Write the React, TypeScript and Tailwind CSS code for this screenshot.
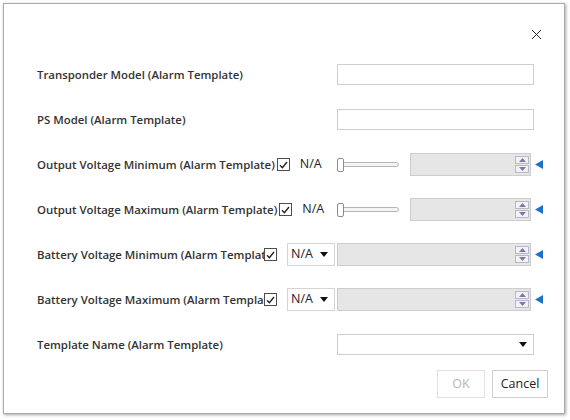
import { X } from 'lucide-react'

const font = { fontFamily: '"Open Sans", "Noto Sans", sans-serif' }

const Caret = () => (
  <svg width="8" height="5" viewBox="0 0 8 5" className="shrink-0">
    <path d="M0 0h8L4 5z" fill="#111" />
  </svg>
)

const Marker = () => (
  <svg width="8" height="9" viewBox="0 0 8 9" className="ml-[4px] shrink-0">
    <path d="M8 0v9L0 4.5z" fill="#1a73c8" />
  </svg>
)

const Check = () => (
  <div className="flex h-[13px] w-[13px] shrink-0 items-center justify-center border border-[#4d4d4d] bg-white">
    <svg width="9" height="8" viewBox="0 0 9 8">
      <path d="M1 4.2l2.4 2.5L8 1" fill="none" stroke="#222" strokeWidth="1.4" />
    </svg>
  </div>
)

const Spin = () => (
  <div className="flex h-full w-[14px] flex-col justify-center gap-[1px] py-[2px]">
    <div className="flex flex-1 items-center justify-center border border-[#b8b8c8] bg-[#f2f2f6]">
      <svg width="7" height="4" viewBox="0 0 7 4">
        <path d="M0 4h7L3.5 0z" fill="#7a7aa6" />
      </svg>
    </div>
    <div className="flex flex-1 items-center justify-center border border-[#b8b8c8] bg-[#f2f2f6]">
      <svg width="7" height="4" viewBox="0 0 7 4">
        <path d="M0 0h7L3.5 4z" fill="#7a7aa6" />
      </svg>
    </div>
  </div>
)

const Slider = () => (
  <div className="relative flex h-[14px] w-[62px] items-center">
    <div className="h-[5px] w-full rounded-full border border-[#b5b5b5] bg-[#f4f4f4]" />
    <div className="absolute left-0 top-0 h-[14px] w-[7px] rounded-[2px] border border-[#8c8c8c] bg-white" />
  </div>
)

const TextRow = ({ label }: { label: string }) => (
  <div className="flex h-[45px] items-center">
    <div className="w-[300px] text-[11.4px] font-semibold text-[#333]">{label}</div>
    <div className="h-[21px] w-[197px] border border-[#cfcfcf] bg-white" />
  </div>
)

const SliderRow = ({ label }: { label: string }) => (
  <div className="flex h-[45px] items-center">
    <div className="flex w-[300px] items-center">
      <span className="whitespace-nowrap text-[11.4px] font-semibold text-[#333]">{label}</span>
      <div className="ml-[2px]">
        <Check />
      </div>
      <span className="ml-[10px] text-[12.5px] text-[#222]">N/A</span>
    </div>
    <Slider />
    <div className="ml-[11px] flex h-[23px] w-[121px] justify-end border border-[#cdcdcd] bg-[#e6e6e6] pr-[1px]">
      <Spin />
    </div>
    <Marker />
  </div>
)

const SelectRow = ({ label }: { label: string }) => (
  <div className="flex h-[45px] items-center">
    <div className="w-[227px] overflow-hidden whitespace-nowrap text-[11.4px] font-semibold text-[#333]">
      {label}
    </div>
    <Check />
    <div className="ml-[10px] flex h-[23px] w-[48px] items-center justify-between border border-[#d4d4d4] bg-white pl-[3px] pr-[6px] text-[12.5px] text-[#222]">
      <span>N/A</span>
      <Caret />
    </div>
    <div className="ml-[2px] flex h-[23px] w-[194px] justify-end border border-[#cdcdcd] bg-[#e6e6e6] pr-[1px]">
      <Spin />
    </div>
    <Marker />
  </div>
)

export default function App() {
  return (
    <div className="h-[420px] w-[570px] bg-white pl-[3px] pt-[3px]" style={font}>
      <div className="flex h-[411px] w-[562px] flex-col border border-[#a9a9a9] bg-white shadow-[1px_1px_3px_rgba(0,0,0,0.35)]">
        <div className="flex h-[48px] justify-end pr-[16px] pt-[18px]">
          <button className="flex h-6 w-6 items-center justify-center text-[#222]">
            <X size={17} strokeWidth={1.4} />
          </button>
        </div>

        <div className="flex flex-col pl-[33px]">
          <TextRow label="Transponder Model (Alarm Template)" />
          <TextRow label="PS Model (Alarm Template)" />
          <SliderRow label="Output Voltage Minimum (Alarm Template)" />
          <SliderRow label="Output Voltage Maximum (Alarm Template)" />
          <SelectRow label="Battery Voltage Minimum (Alarm Template)" />
          <SelectRow label="Battery Voltage Maximum (Alarm Template)" />
          <div className="flex h-[45px] items-center">
            <div className="w-[300px] text-[11.4px] font-semibold text-[#333]">Template Name (Alarm Template)</div>
            <div className="flex h-[21px] w-[197px] items-center justify-end border border-[#cfcfcf] bg-white pr-[6px]">
              <Caret />
            </div>
          </div>
        </div>

        <div className="mt-[3px] flex justify-end gap-[7px] pr-[16px]">
          <button className="h-[28px] w-[48px] border border-[#e2e2e2] bg-white text-[12.5px] text-[#b5b5b5]">OK</button>
          <button className="h-[28px] w-[56px] border border-[#d0d0d0] bg-white text-[12.5px] text-[#222]">Cancel</button>
        </div>
      </div>
    </div>
  )
}
